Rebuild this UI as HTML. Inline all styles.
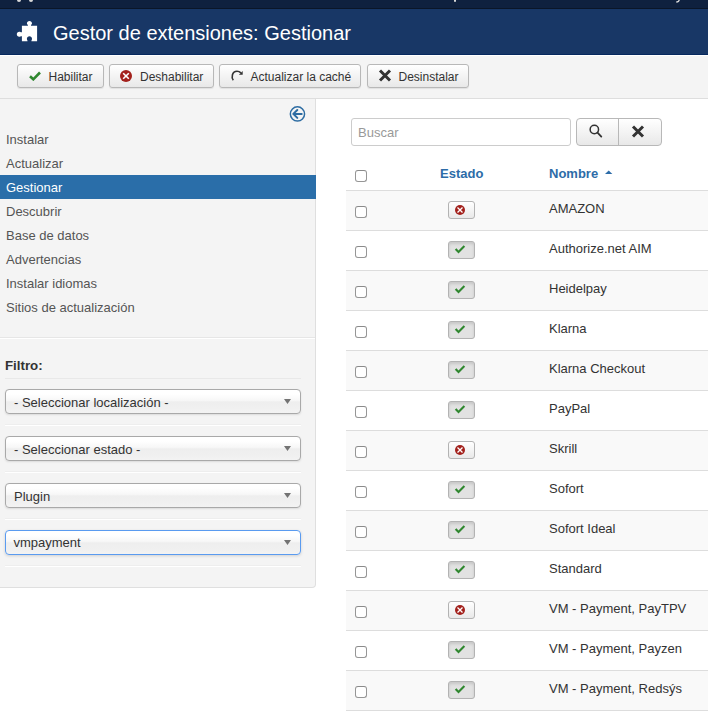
<!DOCTYPE html>
<html><head><meta charset="utf-8">
<style>
*{box-sizing:border-box;margin:0;padding:0}
html,body{width:708px;height:711px;overflow:hidden;background:#fff;font-family:"Liberation Sans",sans-serif;color:#333}
.abs{position:absolute}
#nav{left:0;top:0;width:708px;height:9px;background:#0f213f;border-bottom:1px solid #0b1628}
#hdr{left:0;top:9px;width:708px;height:46px;background:#183766;border-bottom:1px solid #06285e}
#title{left:53px;top:21px;font-size:20px;color:#fff;white-space:nowrap;line-height:24px}
#tb{left:0;top:55px;width:708px;height:44px;background:#f4f4f4;border-top:1px solid #fff;border-bottom:1px solid #dedede}
.btn{position:absolute;top:64px;height:24px;border:1px solid #b8b8b8;border-radius:3px;background:linear-gradient(#fff,#e8e8e8);font-size:12px;color:#333;line-height:22px;white-space:nowrap;box-shadow:0 1px 1px rgba(0,0,0,.08)}
.btn span{position:absolute;top:1px}
#side{left:0;top:99px;width:316px;height:489px;background:#f4f4f4;border-right:1px solid #dfdfdf;border-bottom:1px solid #dfdfdf;border-bottom-right-radius:4px}
.nl{position:absolute;left:6px;font-size:13px;color:#555;white-space:nowrap;line-height:24px}
.act{left:0;width:316px;height:24px;background:#2a6ea9}
.hr{position:absolute;left:5px;width:296px;height:2px;border-top:1px solid #eeeeee;background:#fff}
.sel{position:absolute;left:5px;width:296px;height:25px;border:1px solid #a9a9a9;box-shadow:0 1px 2px rgba(0,0,0,.1);border-radius:4px;background:linear-gradient(#fff 0%,#fff 18%,#f7f7f7 45%,#eeeeee 52%,#f0f0f0 80%,#f3f3f3 100%);font-size:13px;color:#333;line-height:25px;padding-left:8px;white-space:nowrap}
.sel.foc{border:1.5px solid #5a9bf0;box-shadow:0 1px 3px rgba(0,0,0,.15);line-height:24px;padding-left:7.5px}
.sel i{position:absolute;right:9px;top:9px;width:0;height:0;border-left:3.5px solid transparent;border-right:3.5px solid transparent;border-top:5px solid #777}
.cb{position:absolute;left:355px;width:12px;height:12px;border:1px solid #969696;border-top-color:#8a8a8a;border-radius:3px;background:#fff}
.row{position:absolute;left:346px;width:362px;height:40px;border-top:1px solid #ddd}
.odd{background:#f9f9f9}
.sb{position:absolute;left:448px;width:27px;height:18px;border:1px solid #b3b3b3;border-radius:3px}
.sb.off{background:linear-gradient(#fff,#e9e9e9)}
.sb.on{background:#e2e2e2;box-shadow:inset 0 2px 3px rgba(0,0,0,.12)}
.nm{position:absolute;left:549px;font-size:13px;color:#333;white-space:nowrap;line-height:16px}

</style></head><body>
<div id="nav" class="abs"></div>
<svg class="abs" style="left:674px;top:0" width="8" height="4" viewBox="0 0 8 4"><path d="M5.2 0 C5 1.6 4.3 2 2.3 2" fill="none" stroke="#dcdcdc" stroke-width="1.3"/></svg><div class="abs" style="left:17px;top:0;width:4px;height:1.5px;background:#d8d8d8;border-radius:0 0 2px 2px"></div><div class="abs" style="left:29px;top:0;width:4px;height:1.5px;background:#d8d8d8;border-radius:0 0 2px 2px"></div><div class="abs" style="left:454px;top:0;width:2px;height:1.5px;background:#d8d8d8;border-radius:0 0 2px 2px"></div>
<div id="hdr" class="abs"></div>
<svg class="abs" style="left:16px;top:20px" width="22" height="22" viewBox="0 0 22 22"><path fill="#fff" d="M5.9 5.7 H11.9 V5.1 C11.9 4.7 10.9 4.4 10.9 3.3 C10.9 1.8 12 0.9 13.45 0.9 C14.9 0.9 16 1.8 16 3.3 C16 4.4 15 4.7 15 5.1 V5.7 H21.1 V21.3 H15.4 V20.7 C15.8 20.3 16 19.6 16 18.8 C16 17.2 14.9 16.2 13.45 16.2 C12 16.2 10.9 17.2 10.9 18.8 C10.9 19.6 11.1 20.3 11.5 20.7 V21.3 H5.9 V16.2 H5.1 C4.7 16.2 4.4 16.8 3.3 16.8 C1.8 16.8 0.8 15.7 0.8 14.25 C0.8 12.8 1.8 11.7 3.3 11.7 C4.4 11.7 4.7 12.3 5.1 12.3 H5.9 Z"/></svg>
<div id="title" class="abs">Gestor de extensiones: Gestionar</div>
<div id="tb" class="abs"></div>
<div class="btn" style="left:17px;width:87px"><span style="left:30.5px">Habilitar</span></div><div class="btn" style="left:109px;width:105px"><span style="left:30.0px">Deshabilitar</span></div><div class="btn" style="left:219px;width:142px"><span style="left:30.5px">Actualizar la caché</span></div><div class="btn" style="left:367px;width:102px"><span style="left:30.5px">Desinstalar</span></div><svg width="12" height="10" viewBox="0 0 12 10" style="position:absolute;left:29px;top:70.5px"><path d="M1 5.2 L4.3 8.3 L11 1.5" fill="none" stroke="#2f872f" stroke-width="2.6" stroke-linecap="butt" stroke-linejoin="miter"/></svg><svg width="12" height="12" viewBox="0 0 12 12" style="position:absolute;left:120px;top:70px"><circle cx="6" cy="6" r="6" fill="#a3211c"/><path d="M3.2 3.2 L8.8 8.8 M8.8 3.2 L3.2 8.8" stroke="#fff" stroke-width="1.6"/></svg><svg class="abs" style="left:225px;top:64px" width="25" height="24" viewBox="0 0 25 24"><path d="M8.3 16.3 C6.2 13.6 6.9 7.3 12 7.2 C13.6 7.2 14.8 7.8 15.9 8.9" fill="none" stroke="#333" stroke-width="1.6"/><path d="M13.9 10.7 L17.7 6.9 L17.7 10.7 Z" fill="#333"/></svg><svg class="abs" style="left:378px;top:69px" width="14" height="13" viewBox="0 0 14 13"><path d="M2 1.5 L12 11.5 M12 1.5 L2 11.5" stroke="#333" stroke-width="3"/></svg>
<div id="side" class="abs"></div>
<svg class="abs" style="left:285px;top:102px" width="25" height="24" viewBox="0 0 25 24"><circle cx="12.45" cy="11.95" r="7.1" fill="none" stroke="#2d6ca2" stroke-width="1.5"/><path d="M8.4 11.9 H16.7 M12.3 8 L8.3 11.9 L12.3 15.9" fill="none" stroke="#2d6ca2" stroke-width="2" stroke-linecap="round" stroke-linejoin="round"/></svg>
<div class="nl" style="top:128px">Instalar</div><div class="nl" style="top:152px">Actualizar</div><div class="abs act" style="top:175px"></div><div class="nl" style="top:176px;color:#fff">Gestionar</div><div class="nl" style="top:200px">Descubrir</div><div class="nl" style="top:224px">Base de datos</div><div class="nl" style="top:248px">Advertencias</div><div class="nl" style="top:272px">Instalar idiomas</div><div class="nl" style="top:296px">Sitios de actualización</div>
<div class="abs" style="left:0;top:337px;width:315px;height:1px;background:#e6e6e6"></div><div class="abs" style="left:0;top:338px;width:315px;height:1px;background:#fff"></div>
<div class="abs" style="left:5px;top:354px;font-size:13.3px;font-weight:bold;color:#333;line-height:24px">Filtro:</div>
<div class="abs" style="left:5px;top:378px;width:296px;height:1px;background:#e8e8e8"></div>
<div class="sel" style="top:389px">- Seleccionar localización -</div><svg class="abs" style="left:284px;top:399px" width="7" height="5" viewBox="0 0 7 5"><path d="M0 0 H7 L3.5 5 Z" fill="#737373"/></svg><div class="hr" style="top:424px"></div><div class="sel" style="top:436px">- Seleccionar estado -</div><svg class="abs" style="left:284px;top:446px" width="7" height="5" viewBox="0 0 7 5"><path d="M0 0 H7 L3.5 5 Z" fill="#737373"/></svg><div class="hr" style="top:471px"></div><div class="sel" style="top:483px">Plugin</div><svg class="abs" style="left:284px;top:493px" width="7" height="5" viewBox="0 0 7 5"><path d="M0 0 H7 L3.5 5 Z" fill="#737373"/></svg><div class="hr" style="top:518px"></div><div class="sel foc" style="top:530px">vmpayment</div><svg class="abs" style="left:284px;top:540px" width="7" height="5" viewBox="0 0 7 5"><path d="M0 0 H7 L3.5 5 Z" fill="#737373"/></svg><div class="hr" style="top:565px"></div>
<div class="abs" style="left:351px;top:118px;width:220px;height:28px;border:1px solid #ccc;border-radius:3px;background:#fff"></div><div class="abs" style="left:358px;top:125px;font-size:13px;color:#999;line-height:16px">Buscar</div><div class="abs" style="left:576px;top:118px;width:86px;height:28px;border:1px solid #b8b8b8;border-radius:4px;background:linear-gradient(#fff,#e8e8e8)"></div><div class="abs" style="left:618px;top:118px;width:1px;height:28px;background:#b8b8b8"></div><svg class="abs" style="left:583px;top:120px" width="25" height="24" viewBox="0 0 25 24"><circle cx="11.35" cy="9.55" r="4.2" fill="none" stroke="#333" stroke-width="1.5"/><path d="M14.5 12.7 L18.3 16.6" stroke="#333" stroke-width="1.8" stroke-linecap="round"/></svg><svg class="abs" style="left:631px;top:125px" width="14" height="13" viewBox="0 0 14 13"><path d="M2 1.5 L12 11.5 M12 1.5 L2 11.5" stroke="#333" stroke-width="3"/></svg>
<div class="cb" style="top:170px"></div><div class="abs" style="left:440px;top:166px;font-size:13px;font-weight:bold;color:#2d6ca8;line-height:16px">Estado</div><div class="abs" style="left:549px;top:166px;font-size:13px;font-weight:bold;color:#2d6ca8;line-height:16px">Nombre</div><svg class="abs" style="left:605px;top:170px" width="8" height="5" viewBox="0 0 8 5"><path d="M0 4 H7.4 L3.7 0.4 Z" fill="#2d6ca8"/></svg>
<div class="row odd" style="top:190px"></div><div class="cb" style="top:206px"></div><div class="sb off" style="top:201px"></div><svg width="10" height="10" viewBox="0 0 12 12" style="position:absolute;left:455px;top:205px"><circle cx="6" cy="6" r="6" fill="#a3211c"/><path d="M3 3 L9 9 M9 3 L3 9" stroke="#fff" stroke-width="1.6"/></svg><div class="nm" style="top:201px">AMAZON</div>
<div class="row" style="top:230px"></div><div class="cb" style="top:246px"></div><div class="sb on" style="top:241px"></div><svg class="abs" style="left:450px;top:240px" width="20" height="16" viewBox="0 0 20 16"><path d="M5.6 9.1 L8.5 12.0 L14.4 6.1" fill="none" stroke="#2f872f" stroke-width="2.1"/></svg><div class="nm" style="top:241px">Authorize.net AIM</div>
<div class="row odd" style="top:270px"></div><div class="cb" style="top:286px"></div><div class="sb on" style="top:281px"></div><svg class="abs" style="left:450px;top:280px" width="20" height="16" viewBox="0 0 20 16"><path d="M5.6 9.1 L8.5 12.0 L14.4 6.1" fill="none" stroke="#2f872f" stroke-width="2.1"/></svg><div class="nm" style="top:281px">Heidelpay</div>
<div class="row" style="top:310px"></div><div class="cb" style="top:326px"></div><div class="sb on" style="top:321px"></div><svg class="abs" style="left:450px;top:320px" width="20" height="16" viewBox="0 0 20 16"><path d="M5.6 9.1 L8.5 12.0 L14.4 6.1" fill="none" stroke="#2f872f" stroke-width="2.1"/></svg><div class="nm" style="top:321px">Klarna</div>
<div class="row odd" style="top:350px"></div><div class="cb" style="top:366px"></div><div class="sb on" style="top:361px"></div><svg class="abs" style="left:450px;top:360px" width="20" height="16" viewBox="0 0 20 16"><path d="M5.6 9.1 L8.5 12.0 L14.4 6.1" fill="none" stroke="#2f872f" stroke-width="2.1"/></svg><div class="nm" style="top:361px">Klarna Checkout</div>
<div class="row" style="top:390px"></div><div class="cb" style="top:406px"></div><div class="sb on" style="top:401px"></div><svg class="abs" style="left:450px;top:400px" width="20" height="16" viewBox="0 0 20 16"><path d="M5.6 9.1 L8.5 12.0 L14.4 6.1" fill="none" stroke="#2f872f" stroke-width="2.1"/></svg><div class="nm" style="top:401px">PayPal</div>
<div class="row odd" style="top:430px"></div><div class="cb" style="top:446px"></div><div class="sb off" style="top:441px"></div><svg width="10" height="10" viewBox="0 0 12 12" style="position:absolute;left:455px;top:445px"><circle cx="6" cy="6" r="6" fill="#a3211c"/><path d="M3 3 L9 9 M9 3 L3 9" stroke="#fff" stroke-width="1.6"/></svg><div class="nm" style="top:441px">Skrill</div>
<div class="row" style="top:470px"></div><div class="cb" style="top:486px"></div><div class="sb on" style="top:481px"></div><svg class="abs" style="left:450px;top:480px" width="20" height="16" viewBox="0 0 20 16"><path d="M5.6 9.1 L8.5 12.0 L14.4 6.1" fill="none" stroke="#2f872f" stroke-width="2.1"/></svg><div class="nm" style="top:481px">Sofort</div>
<div class="row odd" style="top:510px"></div><div class="cb" style="top:526px"></div><div class="sb on" style="top:521px"></div><svg class="abs" style="left:450px;top:520px" width="20" height="16" viewBox="0 0 20 16"><path d="M5.6 9.1 L8.5 12.0 L14.4 6.1" fill="none" stroke="#2f872f" stroke-width="2.1"/></svg><div class="nm" style="top:521px">Sofort Ideal</div>
<div class="row" style="top:550px"></div><div class="cb" style="top:566px"></div><div class="sb on" style="top:561px"></div><svg class="abs" style="left:450px;top:560px" width="20" height="16" viewBox="0 0 20 16"><path d="M5.6 9.1 L8.5 12.0 L14.4 6.1" fill="none" stroke="#2f872f" stroke-width="2.1"/></svg><div class="nm" style="top:561px">Standard</div>
<div class="row odd" style="top:590px"></div><div class="cb" style="top:606px"></div><div class="sb off" style="top:601px"></div><svg width="10" height="10" viewBox="0 0 12 12" style="position:absolute;left:455px;top:605px"><circle cx="6" cy="6" r="6" fill="#a3211c"/><path d="M3 3 L9 9 M9 3 L3 9" stroke="#fff" stroke-width="1.6"/></svg><div class="nm" style="top:601px">VM - Payment, PayTPV</div>
<div class="row" style="top:630px"></div><div class="cb" style="top:646px"></div><div class="sb on" style="top:641px"></div><svg class="abs" style="left:450px;top:640px" width="20" height="16" viewBox="0 0 20 16"><path d="M5.6 9.1 L8.5 12.0 L14.4 6.1" fill="none" stroke="#2f872f" stroke-width="2.1"/></svg><div class="nm" style="top:641px">VM - Payment, Payzen</div>
<div class="row odd" style="top:670px"></div><div class="cb" style="top:686px"></div><div class="sb on" style="top:681px"></div><svg class="abs" style="left:450px;top:680px" width="20" height="16" viewBox="0 0 20 16"><path d="M5.6 9.1 L8.5 12.0 L14.4 6.1" fill="none" stroke="#2f872f" stroke-width="2.1"/></svg><div class="nm" style="top:681px">VM - Payment, Redsýs</div>
<div class="abs" style="left:346px;top:710px;width:362px;height:1px;background:#ddd"></div>
</body></html>
